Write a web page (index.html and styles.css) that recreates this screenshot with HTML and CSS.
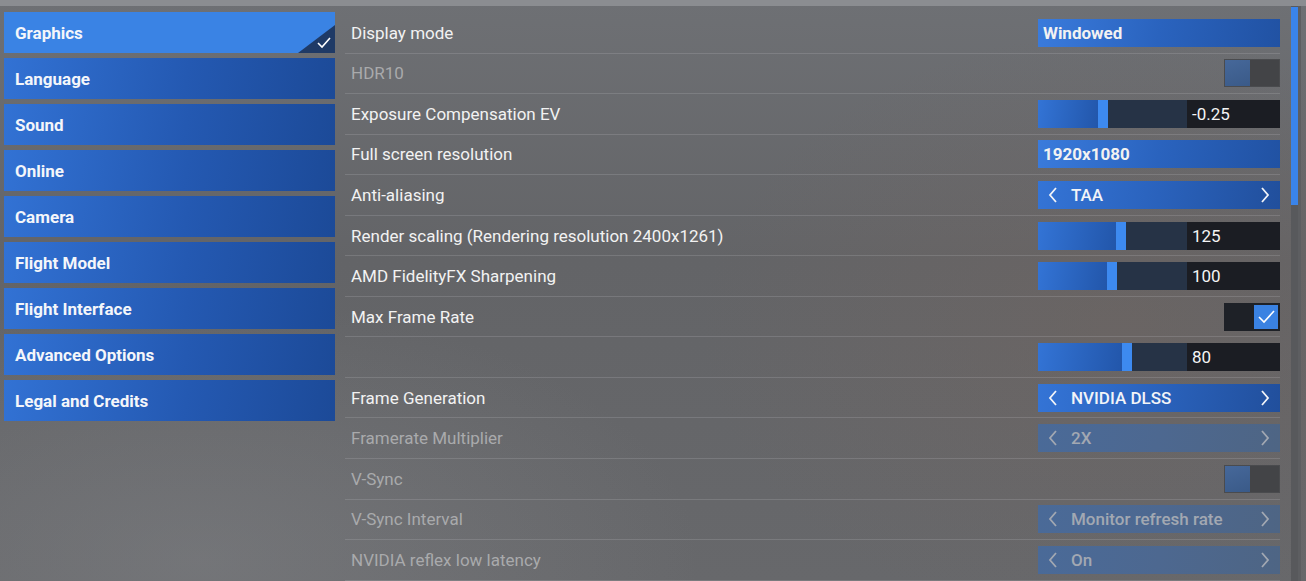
FILE: index.html
```
<!DOCTYPE html>
<html lang="en">
<head>
  <meta charset="UTF-8">
  <meta name="viewport" content="width=device-width, initial-scale=1.0">
  <title>Options - Graphics</title>
  <link rel="stylesheet" href="styles.css">
</head>
<body>
  <div class="topbar"></div>

  <div class="main">
    <nav class="sidebar">
      <div class="nav-item active">
        Graphics
        <span class="corner">
          <svg width="14" height="12" viewBox="0 0 14 12"><polyline points="1,6 5,10 13,1" fill="none" stroke="#fff" stroke-width="1.6"/></svg>
        </span>
      </div>
      <div class="nav-item">Language</div>
      <div class="nav-item">Sound</div>
      <div class="nav-item">Online</div>
      <div class="nav-item">Camera</div>
      <div class="nav-item">Flight Model</div>
      <div class="nav-item">Flight Interface</div>
      <div class="nav-item">Advanced Options</div>
      <div class="nav-item">Legal and Credits</div>
    </nav>

    <section class="settings">
      <div class="row">
        <span class="label">Display mode</span>
        <div class="control dropdown">Windowed</div>
      </div>

      <div class="row disabled">
        <span class="label">HDR10</span>
        <div class="toggle"><span class="knob"></span></div>
      </div>

      <div class="row">
        <span class="label">Exposure Compensation EV</span>
        <div class="control slider">
          <div class="track"><div class="fill" style="width: 60px"></div><div class="thumb"></div></div>
          <div class="value">-0.25</div>
        </div>
      </div>

      <div class="row">
        <span class="label">Full screen resolution</span>
        <div class="control dropdown">1920x1080</div>
      </div>

      <div class="row">
        <span class="label">Anti-aliasing</span>
        <div class="control selector">
          <svg class="chev" width="10" height="16" viewBox="0 0 10 16"><polyline points="8,1 2,8 8,15" fill="none" stroke="currentColor" stroke-width="1.8"/></svg>
          <span class="sel-text">TAA</span>
          <svg class="chev" width="10" height="16" viewBox="0 0 10 16"><polyline points="2,1 8,8 2,15" fill="none" stroke="currentColor" stroke-width="1.8"/></svg>
        </div>
      </div>

      <div class="row">
        <span class="label">Render scaling (Rendering resolution 2400x1261)</span>
        <div class="control slider">
          <div class="track"><div class="fill" style="width: 78px"></div><div class="thumb"></div></div>
          <div class="value">125</div>
        </div>
      </div>

      <div class="row">
        <span class="label">AMD FidelityFX Sharpening</span>
        <div class="control slider">
          <div class="track"><div class="fill" style="width: 69px"></div><div class="thumb"></div></div>
          <div class="value">100</div>
        </div>
      </div>

      <div class="row">
        <span class="label">Max Frame Rate</span>
        <div class="checkbox">
          <span class="box">
            <svg width="22" height="22" viewBox="0 0 22 22"><polyline points="4,11 9,16 19,5" fill="none" stroke="#fff" stroke-width="1.6"/></svg>
          </span>
        </div>
      </div>

      <div class="row">
        <span class="label"></span>
        <div class="control slider">
          <div class="track"><div class="fill" style="width: 84px"></div><div class="thumb"></div></div>
          <div class="value">80</div>
        </div>
      </div>

      <div class="row">
        <span class="label">Frame Generation</span>
        <div class="control selector">
          <svg class="chev" width="10" height="16" viewBox="0 0 10 16"><polyline points="8,1 2,8 8,15" fill="none" stroke="currentColor" stroke-width="1.8"/></svg>
          <span class="sel-text">NVIDIA DLSS</span>
          <svg class="chev" width="10" height="16" viewBox="0 0 10 16"><polyline points="2,1 8,8 2,15" fill="none" stroke="currentColor" stroke-width="1.8"/></svg>
        </div>
      </div>

      <div class="row disabled">
        <span class="label">Framerate Multiplier</span>
        <div class="control selector">
          <svg class="chev" width="10" height="16" viewBox="0 0 10 16"><polyline points="8,1 2,8 8,15" fill="none" stroke="currentColor" stroke-width="1.8"/></svg>
          <span class="sel-text">2X</span>
          <svg class="chev" width="10" height="16" viewBox="0 0 10 16"><polyline points="2,1 8,8 2,15" fill="none" stroke="currentColor" stroke-width="1.8"/></svg>
        </div>
      </div>

      <div class="row disabled">
        <span class="label">V-Sync</span>
        <div class="toggle"><span class="knob"></span></div>
      </div>

      <div class="row disabled">
        <span class="label">V-Sync Interval</span>
        <div class="control selector">
          <svg class="chev" width="10" height="16" viewBox="0 0 10 16"><polyline points="8,1 2,8 8,15" fill="none" stroke="currentColor" stroke-width="1.8"/></svg>
          <span class="sel-text">Monitor refresh rate</span>
          <svg class="chev" width="10" height="16" viewBox="0 0 10 16"><polyline points="2,1 8,8 2,15" fill="none" stroke="currentColor" stroke-width="1.8"/></svg>
        </div>
      </div>

      <div class="row disabled">
        <span class="label">NVIDIA reflex low latency</span>
        <div class="control selector">
          <svg class="chev" width="10" height="16" viewBox="0 0 10 16"><polyline points="8,1 2,8 8,15" fill="none" stroke="currentColor" stroke-width="1.8"/></svg>
          <span class="sel-text">On</span>
          <svg class="chev" width="10" height="16" viewBox="0 0 10 16"><polyline points="2,1 8,8 2,15" fill="none" stroke="currentColor" stroke-width="1.8"/></svg>
        </div>
      </div>
    </section>

    <div class="scrollbar"><div class="scroll-thumb"></div></div>
  </div>
</body>
</html>
```

FILE: styles.css
```
body {
  margin: 0;
  height: 581px;
  overflow: hidden;
  font-family: Roboto, "Liberation Sans", sans-serif;
  color: #f2f2f2;
  background:
    radial-gradient(ellipse 420px 300px at 1120px 330px, rgba(120, 100, 90, 0.3), transparent),
    radial-gradient(ellipse 500px 260px at 200px 560px, rgba(140, 142, 146, 0.35), transparent),
    linear-gradient(to bottom, #6e7074 0%, #636467 45%, #67686b 100%);
}
.topbar {
  height: 6px;
  background: #8b8d91;
}
.main {
  display: flex;
  height: 575px;
}
.sidebar {
  width: 331px;
  margin-left: 4px;
  padding-top: 6px;
  display: flex;
  flex-direction: column;
  gap: 5px;
}
.nav-item {
  position: relative;
  height: 41px;
  padding-left: 11px;
  display: flex;
  align-items: center;
  font-size: 17px;
  font-weight: 700;
  color: #f4f6fa;
  background: linear-gradient(100deg, #3272d4 0%, #2459b2 55%, #1c4a98 100%);
}
.nav-item.active {
  background: #3a83e4;
}
.corner {
  position: absolute;
  right: 0;
  bottom: 0;
  width: 37px;
  height: 28px;
  background: #1f3a66;
  clip-path: polygon(100% 0, 100% 100%, 0 100%);
}
.corner svg {
  position: absolute;
  right: 4px;
  bottom: 4px;
}
.settings {
  width: 935px;
  margin-left: 10px;
  padding-top: 7px;
}
.row {
  box-sizing: border-box;
  height: 40.55px;
  display: flex;
  align-items: center;
  justify-content: space-between;
  padding-left: 6px;
  border-bottom: 1px solid rgba(190, 190, 195, 0.22);
}
.label {
  font-size: 17px;
  color: #f2f2f2;
}
.row.disabled .label {
  color: #a9aaac;
}
.control {
  width: 242px;
  height: 28px;
  box-sizing: border-box;
  display: flex;
  align-items: center;
}
.dropdown {
  padding-left: 5px;
  font-size: 17px;
  font-weight: 700;
  background: linear-gradient(100deg, #3a7bdc 0%, #2a63be 50%, #2152a3 100%);
}
.selector {
  padding: 0 10px 0 10px;
  font-size: 17px;
  font-weight: 500;
  color: #f2f4f8;
  background: linear-gradient(100deg, #3474d6 0%, #2a62bc 50%, #214f9c 100%);
}
.selector .sel-text {
  flex: 1;
  padding-left: 13px;
}
.chev {
  display: block;
}
.row.disabled .selector {
  color: #a2a8b2;
  background: linear-gradient(100deg, #4a6a98 0%, #4d6890 50%, #4e6584 100%);
}
.slider {
  background: #1b1d23;
}
.track {
  flex: 1;
  height: 100%;
  display: flex;
  background: #263346;
}
.fill {
  height: 100%;
  background: linear-gradient(100deg, #3374d6 0%, #2256aa 100%);
}
.thumb {
  width: 10px;
  height: 100%;
  background: #3d8af0;
}
.value {
  width: 88px;
  padding-left: 5px;
  font-size: 17px;
  color: #f4f4f4;
}
.toggle {
  width: 56px;
  height: 28px;
  box-sizing: border-box;
  border: 1px solid #4a4b4e;
  background: #434447;
  display: flex;
}
.knob {
  width: 25px;
  height: 100%;
  background: linear-gradient(160deg, #46689a, #3a5a88);
}
.checkbox {
  width: 56px;
  height: 28px;
  box-sizing: border-box;
  padding: 2px;
  background: #1e2127;
  display: flex;
  justify-content: flex-end;
}
.checkbox .box {
  width: 24px;
  height: 24px;
  background: #3a82e2;
  display: flex;
  align-items: center;
  justify-content: center;
}
.scrollbar {
  width: 7px;
  margin-left: 11px;
  background: #58595c;
  border-right: 3px solid #5d5e61;
}
.scroll-thumb {
  margin-top: 1px;
  height: 198px;
  background: #3a84ea;
}
```
